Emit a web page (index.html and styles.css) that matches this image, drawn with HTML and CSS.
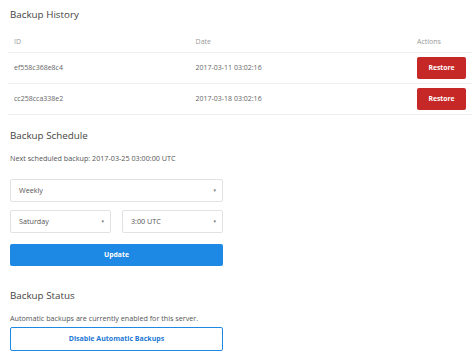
FILE: index.html
```html
<!DOCTYPE html>
<html>
<head>
<meta charset="utf-8">
<link rel="stylesheet" href="styles.css">
</head>
<body>
<div class="page">
  <h2 class="title">Backup History</h2>
  <table class="history">
    <thead>
      <tr><th class="c-id">ID</th><th class="c-date">Date</th><th class="c-act">Actions</th></tr>
    </thead>
    <tbody>
      <tr><td>ef558c368e8c4</td><td>2017-03-11 03:02:16</td><td class="c-act"><button class="btn-restore">Restore</button></td></tr>
      <tr><td>cc258cca338e2</td><td>2017-03-18 03:02:16</td><td class="c-act"><button class="btn-restore">Restore</button></td></tr>
    </tbody>
  </table>

  <h2 class="title schedule-title">Backup Schedule</h2>
  <p class="note">Next scheduled backup: 2017-03-25 03:00:00 UTC</p>
  <div class="form">
    <div class="select"><span>Weekly</span><span class="caret">▾</span></div>
    <div class="row">
      <div class="select"><span>Saturday</span><span class="caret">▾</span></div>
      <div class="select"><span>3:00 UTC</span><span class="caret">▾</span></div>
    </div>
    <button class="btn-update">Update</button>
  </div>

  <h2 class="title status-title">Backup Status</h2>
  <p class="note status-note">Automatic backups are currently enabled for this server.</p>
  <div class="form">
    <button class="btn-disable">Disable Automatic Backups</button>
  </div>
</div>
</body>
</html>
```

FILE: styles.css
```css
* { box-sizing: border-box; }
html, body { margin: 0; padding: 0; background: #fff; }
body { font-family: "Open Sans", "DejaVu Sans", sans-serif; color: #444; }
.page { padding: 0 2px 0 8px; width: 474px; }
.title { margin: 0; padding: 7px 0 0 2px; font-size: 9.8px; font-weight: 500; color: #444; height: 28px; line-height: 16px; }
.history { width: 464px; border-collapse: collapse; font-size: 7px; color: #666; }
.history th { font-weight: 400; color: #999; text-align: left; height: 24px; padding: 4px 6px 0; border-bottom: 1px solid #eee; }
.history td { height: 31px; padding: 0 6px; border-bottom: 1px solid #eee; }
.history th.c-id { width: 182px; }
.history th.c-date { width: 222px; }
.history th.c-act { text-align: left; }
.history td.c-act { text-align: right; padding-right: 6px; }
.btn-restore { width: 49px; height: 22px; border: 0; border-radius: 2px; background: #c62828; color: #fff; font-family: inherit; font-size: 6.8px; font-weight: 700; padding: 0; }
.schedule-title { padding-top: 13px; height: 35px; }
.note { margin: 0; padding: 3px 0 0 2px; font-size: 7.2px; color: #555; height: 29px; line-height: 10px; }
.form { width: 215px; padding-left: 2px; display: flex; flex-direction: column; gap: 8px; }
.select { height: 23px; border: 1px solid #e2e2e2; border-radius: 2px; display: flex; align-items: center; justify-content: space-between; padding: 0 6px 0 8px; font-size: 7.2px; color: #555; }
.caret { font-size: 5px; color: #777; }
.row { display: flex; gap: 11px; }
.row .select { flex: 1; }
.btn-update { margin-top: 3px; height: 22px; border: 0; border-radius: 2px; background: #1e88e5; color: #fff; font-family: inherit; font-size: 6.8px; font-weight: 700; }
.status-title { padding-top: 22px; height: 45px; }
.status-note { padding-top: 2px; height: 16px; }
.btn-disable { height: 24px; border: 1px solid #1e88e5; border-radius: 2px; background: #fff; color: #1e78d5; font-family: inherit; font-size: 7px; font-weight: 700; }
```
